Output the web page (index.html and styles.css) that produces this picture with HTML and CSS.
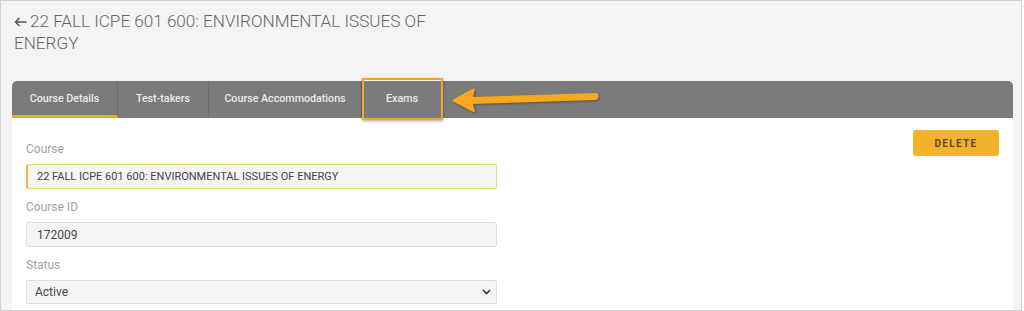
FILE: index.html
```html
<!DOCTYPE html>
<html lang="en">
<head>
<meta charset="utf-8">
<title>Course</title>
<link rel="stylesheet" href="styles.css">
</head>
<body>
<div class="frame">
  <h1 class="title"><svg class="back" width="13" height="10" viewBox="0 0 13 10"><path d="M12.5 5 H1.5 M5.5 1 L1.5 5 L5.5 9" fill="none" stroke="#555" stroke-width="1.5"/></svg>22 FALL ICPE 601 600: ENVIRONMENTAL ISSUES OF ENERGY</h1>
  <div class="card">
    <div class="tabs">
      <div class="tab tab-details active">Course Details</div>
      <div class="tab tab-takers">Test-takers</div>
      <div class="tab tab-acc">Course Accommodations</div>
      <div class="tab tab-exams highlight">Exams</div>
    </div>
    <svg class="pointer" width="150" height="28" viewBox="0 0 150 28">
      <line x1="19" y1="14.5" x2="143" y2="10.5" stroke="#f6a91c" stroke-width="7" stroke-linecap="round"/>
      <polygon points="1,14.5 22,3 19.5,14.5 22,25.5" fill="#f6a91c" stroke="#f6a91c" stroke-width="1.5" stroke-linejoin="round"/>
    </svg>
    <div class="body">
      <div class="form">
        <div class="label">Course</div>
        <div class="field focus">22 FALL ICPE 601 600: ENVIRONMENTAL ISSUES OF ENERGY</div>
        <div class="label">Course ID</div>
        <div class="field num">172009</div>
        <div class="label">Status</div>
        <div class="field select"><span>Active</span>
          <svg class="chev" width="9" height="6" viewBox="0 0 9 6"><path d="M1 1 L4.5 4.5 L8 1" fill="none" stroke="#333" stroke-width="1.6"/></svg>
        </div>
      </div>
      <button class="delete">DELETE</button>
    </div>
  </div>
</div>
</body>
</html>
```
FILE: styles.css
```css
html, body {
  margin: 0;
  padding: 0;
  background: #ffffff;
}
body {
  font-family: Roboto, "Liberation Sans", Arial, sans-serif;
}
.frame {
  width: 1020px;
  height: 309px;
  border: 1px solid #d2d2d2;
  background: #f4f4f4;
  overflow: hidden;
}
.title {
  margin: 9px 0 0 13px;
  max-width: 430px;
  font-size: 17.1px;
  line-height: 22px;
  font-weight: 300;
  color: #666666;
  letter-spacing: 0;
}
.back {
  display: inline-block;
  vertical-align: 0px;
  margin-right: 3px;
}
.card {
  position: relative;
  margin: 27px 0 0 11px;
  width: 1001px;
  background: #ffffff;
}
.tabs {
  display: flex;
  height: 37px;
  background: #7b7b7b;
  border-radius: 5px 5px 0 0;
}
.tab {
  position: relative;
  box-sizing: border-box;
  display: flex;
  align-items: center;
  justify-content: center;
  color: #ececec;
  font-size: 10.7px;
  font-weight: 500;
  border-right: 1px solid #6d6d6d;
  border-bottom: 3px solid transparent;
}
.tab-details { width: 106px; }
.tab-takers { width: 91px; }
.tab-acc { width: 153px; }
.tab-exams { width: 80px; border-right: none; }
.tab.active {
  border-bottom-color: #f5a623;
}
.tab.highlight::after {
  content: "";
  position: absolute;
  top: -3px;
  left: 0;
  right: -1px;
  bottom: -5px;
  border: 2px solid #f5a623;
  box-shadow: 0 1px 3px rgba(0,0,0,0.35);
}
.pointer {
  position: absolute;
  left: 440px;
  top: 5px;
  filter: drop-shadow(1px 1px 1px rgba(0,0,0,0.35));
}
.body {
  display: flex;
  justify-content: space-between;
  align-items: flex-start;
  padding: 12px 14px 0 14px;
  height: 192px;
}
.form {
  width: 471px;
  margin-top: 11px;
  display: flex;
  flex-direction: column;
}
.label {
  font-size: 12px;
  line-height: 16px;
  color: #a3a3a3;
  margin-bottom: 7px;
}
.field {
  box-sizing: border-box;
  height: 25px;
  background: #f5f5f5;
  border: 1px solid #dedede;
  border-radius: 2px;
  font-size: 11px;
  color: #444444;
  padding-left: 10px;
  display: flex;
  align-items: center;
  margin-bottom: 10px;
}
.field.focus {
  border-color: #f4cf7c;
  border-left: 2px solid #f0b33a;
  padding-left: 9px;
}
.field.num {
  font-size: 12px;
}
.field.select {
  height: 24px;
  font-size: 12px;
  padding-left: 8px;
  justify-content: space-between;
  padding-right: 5px;
}
.delete {
  width: 86px;
  height: 26px;
  border: none;
  border-radius: 3px;
  background: #f2b22b;
  color: #5e4a1c;
  font-family: Roboto, "Liberation Sans", Arial, sans-serif;
  font-size: 10px;
  font-weight: 700;
  letter-spacing: 1.3px;
  padding: 0;
}
```
